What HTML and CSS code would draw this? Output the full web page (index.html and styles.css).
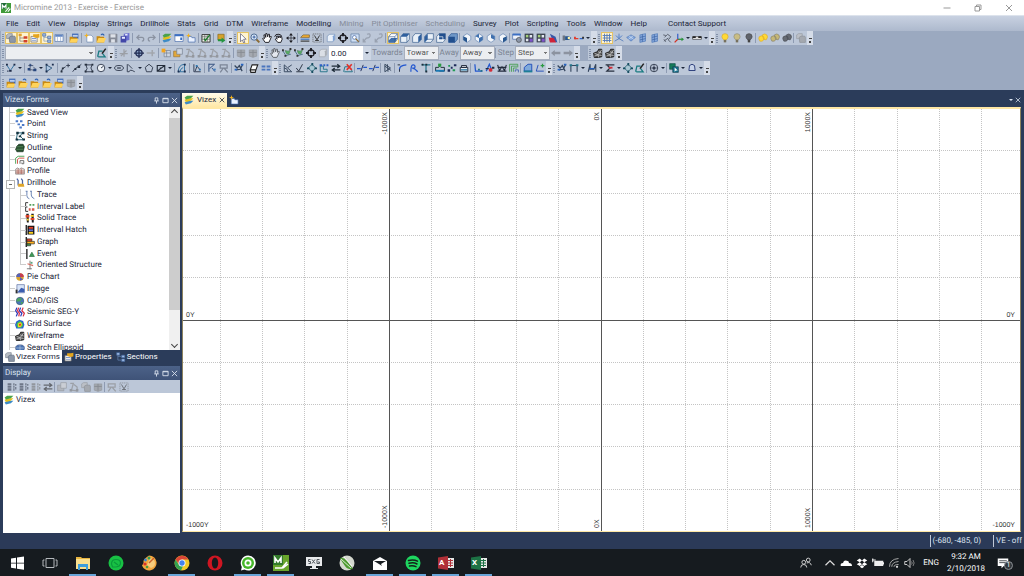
FILE: index.html
```html
<!DOCTYPE html>
<html lang="en">
<head>
    <meta charset="UTF-8">
    <meta name="viewport" content="width=device-width, initial-scale=1.0">
    <title>Micromine 2013 - Exercise - Exercise</title>
    <link rel="stylesheet" href="styles.css">
</head>
<body>
    <svg class="sprite" aria-hidden="true">
        <!-- general -->
        <symbol id="logo" viewBox="0 0 16 16"><path fill="#3f9a3a" d="M0 0h16v16H0z"/><path fill="#1d6b35" d="M0 0h9v9H0z"/><path fill="none" stroke="#fff" stroke-width="1.8" d="M2 9V3l3 4 3-4v6M7 14l6-7M11 14l4-5"/></symbol>
        <symbol id="box" viewBox="0 0 16 16"><path fill="#b8bdc4" stroke="#747b88" d="M1 3l3-2h6v8H1z"/><path fill="#8d97a8" stroke="#5d6878" d="M5 7l3-2h6l1 2v8H6z"/></symbol>
        <symbol id="tree" viewBox="0 0 16 16"><path fill="none" stroke="#666" d="M3 3v10h7M3 8h7"/><path fill="#e0a030" d="M1 1h5v4H1z"/><path fill="#d2412a" d="M9 5h6v4H9zM9 11h6v4H9z"/></symbol>
        <symbol id="properties" viewBox="0 0 16 16"><path fill="#eee" stroke="#666" d="M1.500 5.500h10v9h-10z"/><path fill="#5a7ec0" d="M3 8h7v1H3zM3 11h7v1H3z"/><path fill="#e5a51d" d="M5 2h6l4-1v6l-5 1-5-2z"/></symbol>
        <symbol id="sections" viewBox="0 0 16 16"><path fill="none" stroke="#6d8fbd" d="M3 4v9h6M3 7h6"/><path fill="#9db9e2" stroke="#3d629b" d="M1 1h5v4H1zM9 5h5v4H9zM9 11h5v4H9z"/></symbol>
        <symbol id="table" viewBox="0 0 16 16"><path fill="#fff" stroke="#4c6da5" d="M1.500 2.500h13v11h-13z"/><path fill="#5f85c3" d="M2 3h12v3H2z"/><path stroke="#8ca5cf" d="M5.500 6v7M10.500 6v7"/></symbol>
        <symbol id="folders" viewBox="0 0 16 16"><path fill="#3c66b5" d="M5 1h10v8H5z"/><path fill="#bcd0f0" d="M6 3h8v3H6z"/><path fill="#c98a12" d="M1 6h5l1 1h6v8H1z"/><path fill="#ffd35a" d="M3 9h12l-3 6H1z"/></symbol>
        <symbol id="new" viewBox="0 0 16 16"><path fill="#fff" stroke="#6580ac" d="M4.500 3.500h7l3 3v8h-10z"/><path fill="#f4b21c" d="M4 0l1 3 3 1-3 1-1 3-1-3-3-1 3-1z"/></symbol>
        <symbol id="open" viewBox="0 0 16 16"><path fill="#c98a12" d="M1 5h5l1 1h6v9H1z"/><path fill="#ffd35a" d="M4 8h12l-3 7H1z"/><path fill="none" stroke="#2f62b0" stroke-width="2" d="M8 3q3-3 5 1"/></symbol>
        <symbol id="save" viewBox="0 0 16 16"><path fill="#858b98" d="M1 1h13l1 1v13H1z"/><path fill="#dde1e8" d="M4 2h8v5H4zM5 10h6v5H5z"/></symbol>
        <symbol id="save-all" viewBox="0 0 16 16"><path fill="#6a6fd0" d="M6 1l9-1v11l-9 2z"/><path fill="#4247a8" d="M1 5l9-1v11H1z"/><path fill="#e8ebff" d="M3 6h5v3H3zM8 2l4-1v3H8z"/></symbol>
        <symbol id="undo" viewBox="0 0 16 16"><path fill="none" stroke="#8a92a1" stroke-width="2" d="M3 7h8q3 0 3 3t-3 3M7 3L3 7l4 4"/></symbol>
        <symbol id="redo" viewBox="0 0 16 16"><path fill="none" stroke="#8a92a1" stroke-width="2" d="M13 7H5q-3 0-3 3t3 3M9 3l4 4-4 4"/></symbol>
        <symbol id="layers" viewBox="0 0 16 16"><path fill="#3d8bc7" d="M1 12l4-3h10l-4 4-8 2z"/><path fill="#e3c11e" d="M1 8l4-3h10l-4 4-8 2z"/><path fill="#4aa24c" d="M1 4l4-3 10 0-4 4-8 2z"/></symbol>
        <symbol id="window" viewBox="0 0 16 16"><path fill="#fff" stroke="#3b62a7" d="M1.500 2.500h13v11h-13z"/><path fill="#3b6fc4" d="M1 2h14v3H1zM10 7h3v4h-3z"/></symbol>
        <symbol id="new-tab" viewBox="0 0 16 16"><path fill="#e9f1ff" stroke="#3b62a7" d="M3.500 5.500h5l1 2h5v7h-11z"/><path fill="#f4b21c" d="M4 0l1 3 3 1-3 1-1 3-1-3-3-1 3-1z"/></symbol>
        <symbol id="validate" viewBox="0 0 16 16"><path fill="#eef3ea" stroke="#333" stroke-width="1.500" d="M1.500 2.500h13v12h-13z"/><path stroke="#555" d="M1 6h13M6 3v11M10 3v11M1 10h13"/><path fill="none" stroke="#187c28" stroke-width="2" d="M5 9l2 3 7-9"/></symbol>
        <symbol id="export" viewBox="0 0 16 16"><path fill="#d5a22a" stroke="#80601a" d="M3 2h10v9H3z"/><path fill="#249440" d="M3 10h6V7l6 5-6 4v-3H3z"/></symbol>
        <symbol id="select" viewBox="0 0 16 16"><path fill="#fff" stroke="#446" d="M4 1l9 9H9l2 5-2 1-2-5-3 3z"/></symbol>
        <symbol id="zoom" viewBox="0 0 16 16"><path stroke="#8a6a33" stroke-width="3" d="M10 10l5 5"/><circle cx="6.500" cy="6.500" r="5" fill="#dcebfb" stroke="#47658f" stroke-width="1.500"/><path stroke="#35599a" stroke-width="1.500" d="M4 6.500h5M6.500 4v5"/></symbol>
        <symbol id="pan" viewBox="0 0 16 16"><path fill="#fff" stroke="#1c1c22" stroke-width="1.500" d="M5 15l-4-6 1-1 2 1-1-6h2l1 4V1h2l1 5 1-4h2l0 5 2-2 1 1-2 5-2 4z"/></symbol>
        <symbol id="rotate" viewBox="0 0 16 16"><path fill="#fff" stroke="#1c1c22" stroke-width="1.500" d="M6 15l-4-5 2-1 1 1-1-5h2l1 3V5h2l1 3V5h2l1 5-2 5z"/><path fill="none" stroke="#1c1c22" stroke-width="1.500" d="M1 6q1-5 7-4l4 2"/></symbol>
        <symbol id="move" viewBox="0 0 16 16"><path fill="#1c1c22" d="M8 0l3 4H5zM8 16l3-4H5zM0 8l4-3v6zM16 8l-4-3v6z"/><path fill="none" stroke="#1c1c22" d="M8 3v10M3 8h10"/></symbol>
        <symbol id="drafting" viewBox="0 0 16 16"><path fill="#f2b034" stroke="#6f5527" d="M1 7l4-4h10v4z"/><path fill="#4a7fc4" d="M1 9h14v2H1z"/><path fill="#444" d="M1 12h14v2H1z"/></symbol>
        <symbol id="frame" viewBox="0 0 16 16"><path fill="none" stroke="#555" d="M1.500 1.500h13v13h-13z" stroke-dasharray="2 1"/><path fill="none" stroke="#333" stroke-width="1.500" d="M4 4l4 7 4-7M5 12h6"/></symbol>
        <symbol id="cube" viewBox="0 0 16 16"><path fill="#eaf1fa" stroke="#6d8bb6" d="M2 5l4-3h8v8l-3 4H2z"/><path fill="#7fa2d5" d="M11 5l3-3v8l-3 4z"/></symbol>
        <symbol id="target" viewBox="0 0 16 16"><circle cx="8" cy="8" r="5" fill="none" stroke="#1c1c22" stroke-width="2"/><path stroke="#1c1c22" stroke-width="3" d="M8 0v5M8 11v5M0 8h5M11 8h5"/></symbol>
        <symbol id="zoom-window" viewBox="0 0 16 16"><path fill="#cfe0f5" stroke="#54719c" d="M1.500 1.500h13v13h-13z"/><circle cx="7" cy="7" r="3" fill="#fff" stroke="#35599a"/><path stroke="#8a6a33" stroke-width="2" d="M9 9l5 5"/></symbol>
        <symbol id="previous-view" viewBox="0 0 16 16"><path fill="none" stroke="#98a1b0" stroke-width="2" d="M8 2q5-2 5 2t-6 4l-5 6M2 9v5h4"/></symbol>

        <!-- view cubes -->
        <symbol id="view-front" viewBox="0 0 16 16"><path fill="#fff" stroke="#2f5587" d="M1 6l4-5h10v9l-4 5H1z"/><path fill="#3e6fad" d="M1 12l4-4h10l-4 7H1z"/><path fill="none" stroke="#2f5587" d="M1 6h10v9M11 6l4-5"/></symbol>
        <symbol id="view-top" viewBox="0 0 16 16"><path fill="#e9f0f8" stroke="#2f5587" d="M1 6l4-5h10v9l-4 5H1z"/><path fill="#2e5f9e" d="M1 6l4-5h10l-4 5z"/><path fill="none" stroke="#2f5587" d="M11 6v9"/></symbol>
        <symbol id="view-right" viewBox="0 0 16 16"><path fill="#e9f0f8" stroke="#2f5587" d="M1 6l4-5h10v9l-4 5H1z"/><path fill="#2e5f9e" d="M10 6l5-5v9l-5 5z"/></symbol>
        <symbol id="view-left" viewBox="0 0 16 16"><path fill="#e9f0f8" stroke="#2f5587" d="M1 6l4-5h10v9l-4 5H1z"/><path fill="#2e5f9e" d="M1 6l5-5v9l-5 5z"/><path fill="none" stroke="#2f5587" d="M6 10h9"/></symbol>
        <symbol id="view-back" viewBox="0 0 16 16"><path fill="#e9f0f8" stroke="#2f5587" d="M1 6l4-5h10v9l-4 5H1z"/><path fill="#214f8e" d="M5 1h10v9H5z"/><path fill="none" stroke="#fff" d="M2 6h9v8"/></symbol>
        <symbol id="view-bottom" viewBox="0 0 16 16"><path fill="#6f97c7" stroke="#214f8e" d="M1 6l4-5h10v9l-4 5H1z"/><path fill="#214f8e" d="M1 6h10v9H1z"/></symbol>
        <symbol id="iso-one" viewBox="0 0 16 16"><path fill="#f2f6fb" stroke="#5f80b0" d="M8 1l6 4v6l-6 4-6-4V5z"/><path fill="#27568f" d="M2 5l6 3v7l-6-4z"/></symbol>
        <symbol id="iso-two" viewBox="0 0 16 16"><path fill="#f2f6fb" stroke="#5f80b0" d="M8 1l6 4v6l-6 4-6-4V5z"/><path fill="#3f70ae" d="M8 1v7L2 5zM8 8l6-3v6l-6 4z"/></symbol>
        <symbol id="iso-three" viewBox="0 0 16 16"><path fill="#f2f6fb" stroke="#5f80b0" d="M8 1l6 4v6l-6 4-6-4V5z"/><path fill="#3f70ae" d="M8 2l6 3v6L8 8z"/></symbol>
        <symbol id="iso-four" viewBox="0 0 16 16"><path fill="#f2f6fb" stroke="#5f80b0" d="M8 1l6 4v6l-6 4-6-4V5z"/><path fill="#27568f" d="M14 5L8 8v7l6-4z"/></symbol>

        <symbol id="camera" viewBox="0 0 16 16"><path fill="#eef3fb" stroke="#3b62a7" d="M1 2h12v8H1z"/><path fill="#3b6fc4" d="M1 1h13v3H1z"/><circle cx="11" cy="11" r="4" fill="#8c97a9" stroke="#444"/></symbol>
        <symbol id="film" viewBox="0 0 16 16"><path fill="#3d4452" d="M1 1h14v14H1z"/><path fill="#a4d07a" d="M3 3h4v4H3z"/><path fill="#e4e8f0" d="M9 3h4v4H9zM3 9h4v4H3z"/><path fill="#7e54c8" d="M9 9h5v5H9z"/></symbol>
        <symbol id="film-stop" viewBox="0 0 16 16"><path fill="#3556a8" d="M3 1l9 5 3 9-7-2z"/><path fill="#cf2338" d="M1 7l8 1 4 7H3z"/></symbol>
        <symbol id="torch" viewBox="0 0 16 16"><path fill="#6b7583" d="M1 4h4v8H1z"/><path fill="#27568f" d="M5 5h6l4 3-4 3H5z"/><circle cx="11" cy="8" r="2" fill="#fff4a8"/></symbol>
        <symbol id="measure" viewBox="0 0 16 16"><path stroke="#e03b2c" stroke-width="2" d="M1 9h6"/><path stroke="#2d63c8" stroke-width="2" d="M9 9h6"/><path fill="#e03b2c" d="M0 6h3v4H0z"/><path fill="#333" d="M13 6h3v3h-3z"/></symbol>
        <symbol id="grid" viewBox="0 0 16 16"><path stroke="#567dbb" stroke-width="1.500" d="M4 1v14M8 1v14M12 1v14M1 4h14M1 8h14M1 12h14"/></symbol>
        <symbol id="axes" viewBox="0 0 16 16"><path fill="#a5bee5" stroke="#4873b5" stroke-width="1.200" d="M8 1v8M8 9l7 4M8 9l-7 4M3 4l5 5 5-5"/></symbol>
        <symbol id="plane" viewBox="0 0 16 16"><path fill="#86a8dc" stroke="#4873b5" d="M1 7l7-4 7 4-7 6z"/><path stroke="#d6e3f6" d="M5 5l7 5M11 5l-7 5"/></symbol>
        <symbol id="wall" viewBox="0 0 16 16"><path fill="#86a8dc" stroke="#4873b5" d="M3 3l9-2v12l-9 2z"/><path stroke="#375f9d" d="M3 7l9-2M3 11l9-2M7 2v12"/></symbol>
        <symbol id="ruler" viewBox="0 0 16 16"><path fill="none" stroke="#555d6b" stroke-width="1.500" d="M2 3l4 1M4 7l5-5 5 4-4 5 4 4M3 13l7-5M3 10l3 4"/></symbol>
        <symbol id="triad" viewBox="0 0 16 16"><path stroke="#28913b" stroke-width="2" d="M6 10h8"/><path stroke="#3a62c7" stroke-width="2" d="M6 10V1"/><path stroke="#d23125" stroke-width="2" d="M6 10l-5 5"/><path fill="#28913b" d="M12 7l4 3-4 3z"/></symbol>
        <symbol id="scale-bar" viewBox="0 0 16 16"><path fill="#fff" stroke="#222" d="M1 6h14v4H1z"/><path fill="#222" d="M1 5h5v3H1zM10 5h5v3h-5z"/></symbol>
        <symbol id="bulb" viewBox="0 0 16 16"><path fill="#ffd936" stroke="#d6a82b" d="M8 1q5 0 5 5 0 2-3 5H6Q3 8 3 6q0-5 5-5z"/><path fill="#77705d" d="M6 11h4v4H6z"/></symbol>
        <symbol id="bulb-dim" viewBox="0 0 16 16"><path fill="#c9bd83" stroke="#8b8874" d="M8 1q5 0 5 5 0 2-3 5H6Q3 8 3 6q0-5 5-5z"/><path fill="#77705d" d="M6 11h4v4H6z"/></symbol>
        <symbol id="bulb-off" viewBox="0 0 16 16"><path fill="#5f646c" stroke="#444" d="M8 1q5 0 5 5 0 2-3 5H6Q3 8 3 6q0-5 5-5z"/><path fill="#444" d="M6 11h4v4H6z"/></symbol>
        <symbol id="lamps" viewBox="0 0 16 16"><path fill="#ffd936" stroke="#dfac25" d="M7 3q4-3 7 0t-1 8l-4-1zM2 6q4-3 7 0t-2 7H3q-3-4-1-7z"/></symbol>
        <symbol id="lamps-dim" viewBox="0 0 16 16"><path fill="#c6b876" stroke="#837f6d" d="M7 3q4-3 7 0t-1 8l-4-1zM2 6q4-3 7 0t-2 7H3q-3-4-1-7z"/></symbol>
        <symbol id="lamps-off" viewBox="0 0 16 16"><path fill="#666b73" stroke="#484c54" d="M7 3q4-3 7 0t-1 8l-4-1zM2 6q4-3 7 0t-2 7H3q-3-4-1-7z"/></symbol>

        <!-- editing -->
        <symbol id="string" viewBox="0 0 16 16"><path fill="none" stroke="#1f5f73" stroke-width="1.500" d="M2 14l2-11h8L8 8l6 6z"/><path fill="#15333f" d="M1 12h4v3H1zM2 1h4v4H2zM11 1h4v4h-4zM6 7h4v3H6zM12 12h4v3h-4z"/></symbol>
        <symbol id="edit-string" viewBox="0 0 16 16"><path fill="none" stroke="#187b80" stroke-width="2" d="M1 14l2-9h6M2 14h11l-4-5"/><path fill="none" stroke="#222" stroke-width="2.500" d="M8 9l6-8"/></symbol>
        <symbol id="snap" viewBox="0 0 16 16"><path fill="none" stroke="#7d8798" stroke-width="2" d="M1 9h13M8 2v12M3 13l9-9"/></symbol>
        <symbol id="globe" viewBox="0 0 16 16"><circle cx="8" cy="8" r="5" fill="#8fa9cf" stroke="#222c52" stroke-width="2"/><path stroke="#222c52" stroke-width="2" d="M8 0v16M0 8h16"/></symbol>
        <symbol id="point-add" viewBox="0 0 16 16"><path stroke="#8992a2" stroke-width="2.500" d="M1 8h6M10 3v10M7 8h7"/></symbol>
        <symbol id="sheet-new" viewBox="0 0 16 16"><path fill="#cdd5e2" stroke="#6e7889" d="M5 4h10v10H5z"/><path stroke="#6e7889" d="M5 8h10M9 4v10"/><path fill="#f4a51c" d="M1 1h6v6H1z"/></symbol>
        <symbol id="sheet-open" viewBox="0 0 16 16"><path fill="#e2a83a" stroke="#967034" d="M1 5h10v9H1z"/><path fill="#cdd5e2" stroke="#6e7889" d="M6 1h9v9H6z"/></symbol>
        <symbol id="segment" viewBox="0 0 16 16"><path fill="none" stroke="#7f8898" stroke-width="2" d="M2 2h5L4 13l9 1V8L8 4"/><path fill="#6f788c" d="M1 11h4v4H1zM11 11h4v4h-4z"/></symbol>
        <symbol id="grey-sheet" viewBox="0 0 16 16"><path fill="#8d96a6" stroke="#6d7687" d="M2 3h12v10l-6 2-6-2z"/><path stroke="#5c6577" stroke-width="1.500" d="M2 7h12M8 3v11"/></symbol>
        <symbol id="leaf" viewBox="0 0 16 16"><path fill="none" stroke="#4b6f88" stroke-width="1.500" d="M1 4l5 8 8-2"/><path fill="#53b060" stroke="#5c7b68" d="M5 4l5 1 4-3-3 8-4-1z"/><path fill="#333" d="M0 2h3v3H0zM4 11h3v3H4zM12 0h3v3h-3z"/></symbol>
        <symbol id="solid" viewBox="0 0 16 16"><path fill="#555" stroke="#1d1d1d" stroke-width="1.500" d="M1 8l6-2 2-4h5v12l-5 1H2z"/><path fill="none" stroke="#ddd" d="M2 8l6 3 6-8M8 11l1 4M2 13l6-2 6 1M8 6l6 2"/></symbol>
        <symbol id="arrow-left" viewBox="0 0 16 16"><path fill="#8c93a0" d="M0 8l6-5v3h9v4H6v3z"/></symbol>
        <symbol id="arrow-right" viewBox="0 0 16 16"><path fill="#8c93a0" d="M16 8l-6-5v3H1v4h9v3z"/></symbol>

        <!-- string tools -->
        <symbol id="line" viewBox="0 0 16 16"><path fill="none" stroke="#2f6f9f" stroke-width="1.500" d="M1 3l6 9 7-10"/><path fill="#1e2945" d="M0 1h3v3H0zM5 11h4v3H5zM12 1h3v3h-3zM2 12h2v2H2z"/></symbol>
        <symbol id="nodes" viewBox="0 0 16 16"><path fill="none" stroke="#55617a" stroke-width="1.500" d="M2 4h8M2 10l12 2M5 1v12M10 6l4 4"/><path fill="#27457c" d="M1 8h4v4H1zM4 2h3v3H4zM10 9h5v4h-5z"/></symbol>
        <symbol id="play-line" viewBox="0 0 16 16"><path fill="#aec5e0" stroke="#345a7e" stroke-width="1.500" d="M2 3l9 5-9 6z"/><path fill="#1b2c4c" d="M11 1h3v3h-3zM1 1h3v3H1zM1 12h3v3H1z"/></symbol>
        <symbol id="polyline" viewBox="0 0 16 16"><path fill="none" stroke="#333d50" stroke-width="1.500" d="M2 14l2-5 5-3M10 4h6M13 1v6"/><path fill="#27303f" d="M1 12h3v3H1zM3 7h3v3H3z"/></symbol>
        <symbol id="slope" viewBox="0 0 16 16"><path fill="none" stroke="#333d50" stroke-width="1.500" d="M1 14l4-5 5-3 5-4"/><path fill="#27303f" d="M4 8h3v3H4zM9 4h4v4H9z"/></symbol>
        <symbol id="polygon" viewBox="0 0 16 16"><path fill="none" stroke="#333d50" stroke-width="1.500" d="M3 3h10l-2 5 3 6H2l3-5z"/><path fill="#27303f" d="M1 1h4v3H1zM12 1h3v3h-3zM1 12h3v3H1zM12 12h3v3h-3z"/></symbol>
        <symbol id="circle" viewBox="0 0 16 16"><circle cx="8" cy="8" r="6" fill="#edf1f6" stroke="#333d50" stroke-width="1.500"/><path stroke="#333d50" stroke-width="1.500" d="M8 8l4-3"/></symbol>
        <symbol id="ellipse" viewBox="0 0 16 16"><ellipse cx="8" cy="8" rx="7" ry="4" fill="none" stroke="#333d50" stroke-width="1.500"/><path stroke="#333d50" stroke-width="2" d="M5 8h6"/></symbol>
        <symbol id="curve" viewBox="0 0 16 16"><path fill="none" stroke="#333d50" stroke-width="1.500" d="M2 2v12h3q1-4 5-2l4 2M3 2l7 7"/></symbol>
        <symbol id="pentagon" viewBox="0 0 16 16"><path fill="none" stroke="#333d50" stroke-width="1.500" d="M8 2l6 5-2 7H4L2 7z"/></symbol>
        <symbol id="rectangle" viewBox="0 0 16 16"><path fill="none" stroke="#222b39" stroke-width="1.800" d="M2 4h12v9H2zM2 13L14 4M6 8h4"/></symbol>
        <symbol id="arc" viewBox="0 0 16 16"><path fill="none" stroke="#2f6f9f" stroke-width="1.500" d="M2 14Q2 3 12 2v12zM5 14q0-5 5-7"/><path fill="#1b2c4c" d="M1 12h3v3H1zM11 1h3v3h-3zM11 12h3v3h-3z"/></symbol>
        <symbol id="trim" viewBox="0 0 16 16"><path fill="none" stroke="#2f3b52" stroke-width="1.500" d="M3 2v12h11M5 13L8 5l5 6"/><path fill="#2b78b4" d="M6 3h3v3H6zM11 9h3v3h-3z"/></symbol>
        <symbol id="flag-line" viewBox="0 0 16 16"><path fill="none" stroke="#2e4a7b" stroke-width="1.500" d="M3 1v13M3 2h9L4 9M8 8l5 6"/><path fill="#4680c1" d="M10 9h4v3h-4z"/></symbol>
        <symbol id="tripod" viewBox="0 0 16 16"><path fill="none" stroke="#7b8596" stroke-width="2" d="M2 3h11v5H2zM7 8l-5 7M8 8l6 7"/></symbol>
        <symbol id="surface" viewBox="0 0 16 16"><path fill="none" stroke="#35465e" stroke-width="2" d="M1 4l4 4 3-3M3 11l7-1 4-8M8 3l5 10"/><path fill="#2866c2" d="M1 9h4v3H1zM11 1h4v3h-4z"/></symbol>
        <symbol id="eraser" viewBox="0 0 16 16"><path fill="#fff" stroke="#222" stroke-width="1.800" d="M5 3h9l-3 8H2zM2 11l1 4h7l1-4"/></symbol>
        <symbol id="label" viewBox="0 0 16 16"><path fill="#4a75bd" d="M1 4h6v3H1zM9 4h6v3H9zM1 9h6v3H1zM9 9h6v3H9z"/></symbol>
        <symbol id="angle" viewBox="0 0 16 16"><path fill="none" stroke="#35465e" stroke-width="1.500" d="M2 3v11h12zM2 8q5 0 6 6M8 7l6-4"/></symbol>
        <symbol id="check-line" viewBox="0 0 16 16"><path fill="none" stroke="#27303f" stroke-width="1.500" d="M2 8l4 5 6-11M2 14h12"/></symbol>
        <symbol id="diamond" viewBox="0 0 16 16"><path fill="#a9c7d4" stroke="#3c7181" stroke-width="1.500" d="M8 2l6 6-6 6-6-6z"/><path fill="#184f62" d="M7 0h3v4H7zM7 12h3v4H7zM0 7h4v3H0zM12 7h4v3h-4z"/></symbol>
        <symbol id="steps" viewBox="0 0 16 16"><path fill="none" stroke="#247489" stroke-width="1.500" d="M2 14V5h5v5h6v4z"/><path fill="#2b5fc4" d="M1 2h4v3H1zM7 2h3v3H7zM12 2h3v3h-3z"/></symbol>
        <symbol id="swap" viewBox="0 0 16 16"><path fill="none" stroke="#1d2b38" stroke-width="2" d="M1 5h12M10 2l4 3-4 3M15 11H3M6 8l-4 3 4 3"/></symbol>
        <symbol id="delete-string" viewBox="0 0 16 16"><path fill="none" stroke="#247489" stroke-width="1.500" d="M1 14l2-8h5M2 14h13l-2-4"/><path stroke="#e1302a" stroke-width="2.500" d="M6 2l8 9M14 2l-8 9"/></symbol>
        <symbol id="split" viewBox="0 0 16 16"><path stroke="#2458cf" stroke-width="2" d="M0 9h6M10 7h6"/><path stroke="#1d2b58" stroke-width="1.500" d="M6 13l4-10"/></symbol>
        <symbol id="dot-line" viewBox="0 0 16 16"><path fill="none" stroke="#34455c" stroke-width="1.500" d="M3 2v12l9-6zM3 5l10 7M7 2l1 12"/></symbol>
        <symbol id="fillet" viewBox="0 0 16 16"><path fill="none" stroke="#222b3c" stroke-width="1.500" d="M1 3h4M4 14V8"/><path fill="none" stroke="#2458cf" stroke-width="2.200" d="M4 10q0-6 11-7"/></symbol>
        <symbol id="loop" viewBox="0 0 16 16"><path fill="none" stroke="#2458cf" stroke-width="2" d="M3 14q0-12 4-11t2 5H5q5 1 9 6"/></symbol>
        <symbol id="tee" viewBox="0 0 16 16"><path fill="none" stroke="#247489" stroke-width="2" d="M1 3h14M8 3v11"/><path fill="#1d2b38" d="M1 1h3v3H1zM7 1h3v3H7zM7 12h3v3H7z"/></symbol>
        <symbol id="join" viewBox="0 0 16 16"><path fill="none" stroke="#1d2b38" stroke-width="1.500" d="M1 13V7h5l3-4M7 13h8V7H9"/><path fill="#2a9a42" d="M5 1h5v5H5z"/><path fill="#1b79b5" d="M1 11h14v3H1z"/></symbol>
        <symbol id="scatter" viewBox="0 0 16 16"><path fill="#1d2b58" d="M1 10h4v4H1zM6 6h3v3H6zM11 2h4v3h-4z"/><path fill="#219a55" d="M9 10h4v3H9zM2 3h3v3H2z"/></symbol>
        <symbol id="merge" viewBox="0 0 16 16"><path fill="#e8edf2" stroke="#222b3c" stroke-width="1.500" d="M2 7h12v7H2zM4 4h8v3H4z"/><path fill="#1d6f9f" d="M3 10h10v2H3z"/></symbol>
        <symbol id="corner" viewBox="0 0 16 16"><path fill="none" stroke="#2458cf" stroke-width="2" d="M3 2l1 11h11"/><path fill="#247489" d="M8 9h3v3H8zM12 11h3v3h-3z"/></symbol>
        <symbol id="ball-red" viewBox="0 0 16 16"><path fill="none" stroke="#2458cf" stroke-width="2" d="M2 13L7 2l3 8"/><circle cx="9" cy="11" r="3" fill="#d42e39"/><path fill="#222b3c" d="M1 8h5v2H1zM11 6h4v3h-4z"/></symbol>
        <symbol id="glasses" viewBox="0 0 16 16"><path fill="none" stroke="#222b3c" stroke-width="1.800" d="M1 3l3 9 4-6 4 6 3-9M1 7h14M1 13h14"/></symbol>
        <symbol id="contour" viewBox="0 0 16 16"><path fill="none" stroke="#3c9b45" stroke-width="1.300" d="M1 14V2h13v5M4 14V5h9M7 14V8h6"/><path fill="none" stroke="#4a67ae" stroke-width="1.500" d="M10 14v-3h5v4"/></symbol>
        <symbol id="extrude" viewBox="0 0 16 16"><path fill="#7fa9db" stroke="#234fba" stroke-width="1.500" d="M2 7l6-5h6v11H2z"/><path fill="#1d7e96" d="M1 12h14v3H1z"/></symbol>
        <symbol id="extend" viewBox="0 0 16 16"><path fill="none" stroke="#234fba" stroke-width="1.500" d="M5 3L2 13h12"/><path stroke="#2a9a42" stroke-width="2" d="M9 4h6M12 1v6"/></symbol>
        <symbol id="bench" viewBox="0 0 16 16"><path fill="none" stroke="#35465e" stroke-width="1.800" d="M3 14V4h10v10"/><path fill="#247489" d="M1 2h4v3H1zM11 2h4v3h-4z"/></symbol>
        <symbol id="zigzag" viewBox="0 0 16 16"><path fill="none" stroke="#35465e" stroke-width="1.800" d="M2 14l3-12v8h6l3-8v12"/><path fill="#1f5dbd" d="M4 8h8v2H4z"/></symbol>
        <symbol id="sigma" viewBox="0 0 16 16"><path fill="none" stroke="#27303f" stroke-width="2" d="M1 3h14M4 4l4 4-5 5h12"/><path fill="#d42e39" d="M6 6h6v3H6z"/></symbol>
        <symbol id="wheel" viewBox="0 0 16 16"><circle cx="8" cy="8" r="6" fill="none" stroke="#333d50" stroke-width="1.500"/><circle cx="8" cy="8" r="2.500" fill="#333d50"/><path stroke="#333d50" d="M2 8h12M8 2v12"/></symbol>
        <symbol id="blocks" viewBox="0 0 16 16"><path fill="#147a5a" stroke="#0c4a45" d="M1 1h9v9H1z"/><path fill="#16708c" stroke="#143c4d" d="M6 6h9v9H6z"/><path fill="#fff" d="M9 7l5 5h-3l-2 2z"/></symbol>
        <symbol id="shield" viewBox="0 0 16 16"><path fill="#c7d3e8" stroke="#273a78" stroke-width="1.500" d="M3 12h10l-1-8-4-2-4 2z"/></symbol>

        <!-- form icons -->
        <symbol id="point" viewBox="0 0 16 16"><path fill="#4a78c8" d="M1 2h4v3H1zM8 2h4v3H8zM4 7h4v3H4zM11 8h4v3h-4zM7 12h4v3H7z"/></symbol>
        <symbol id="outline" viewBox="0 0 16 16"><path fill="#274d2d" stroke="#132d1a" d="M3 5l3-3h7l2 4-2 8H3l-2-4z"/><path stroke="#69a06c" d="M3 6h10M2 10h11"/></symbol>
        <symbol id="contour-form" viewBox="0 0 16 16"><path fill="none" stroke="#4ba154" stroke-width="1.500" d="M1 14V5l4-3h10"/><path fill="none" stroke="#d05143" stroke-width="1.500" d="M4 14V7l3-2h8"/><path fill="none" stroke="#666" stroke-width="1.500" d="M8 14V9h6v5h-3v-2"/></symbol>
        <symbol id="profile" viewBox="0 0 16 16"><path fill="#e8d9d6" stroke="#777" d="M1 5l3-2 3 2 3-2 5 2v8H1z"/><path fill="none" stroke="#a35043" d="M1 8h14M1 11h14M5 4v9M10 4v9"/></symbol>
        <symbol id="drillhole" viewBox="0 0 16 16"><path fill="none" stroke="#4963a0" stroke-width="2" d="M3 1l2 3v8M10 1l2 3v6"/><path fill="#dda52b" d="M5 9h9l1 5H5z"/></symbol>
        <symbol id="trace" viewBox="0 0 16 16"><path fill="none" stroke="#4f6ea6" stroke-width="1.300" d="M1 2h3M3 2v7q0 4 4 5M8 2h3M10 2v6q0 4 5 6"/></symbol>
        <symbol id="interval-label" viewBox="0 0 16 16"><path fill="none" stroke="#333" stroke-width="1.500" d="M5 1H1v14h4M1 8h3"/><path fill="#55a05b" d="M7 3h3v3H7zM12 3h3v3h-3z"/><path fill="#d45a4e" d="M6 10h3v4H6zM11 10h4v4h-4z"/></symbol>
        <symbol id="solid-trace" viewBox="0 0 16 16"><path fill="#222" d="M2 1h4v14H3zM10 1h4v14h-3z"/><path fill="#e0432a" d="M1 3h6v4H1zM9 8h6v3H9z"/><path fill="#ffd21e" d="M9 3h5v3H9zM3 9h3v3H3z"/></symbol>
        <symbol id="interval-hatch" viewBox="0 0 16 16"><path fill="#111" d="M1 0h2v16H1zM4 1h11v14H4z"/><path fill="#e0432a" d="M6 3h7v3H6z"/><path fill="#5d6ed0" d="M6 7h7v3H6z"/><path fill="#ffd21e" d="M6 11h7v3H6z"/></symbol>
        <symbol id="graph" viewBox="0 0 16 16"><path fill="#111" d="M1 0h2v16H1z"/><path fill="#e0432a" stroke="#222" d="M3 3h8v4H3z"/><path fill="#ffb11e" stroke="#222" d="M3 7h12v4H3z"/><path fill="#4ca256" stroke="#222" d="M3 11h6v3H3z"/></symbol>
        <symbol id="event" viewBox="0 0 16 16"><path fill="#111" d="M2 0h2v16H2z"/><path fill="#3d9b55" stroke="#26663a" d="M7 12l4-7 4 7z"/></symbol>
        <symbol id="structure" viewBox="0 0 16 16"><path fill="none" stroke="#777" stroke-width="1.500" d="M8 1v14M3 14h8"/><path fill="none" stroke="#d86c5f" stroke-width="2" d="M4 6l9 3"/><path fill="#5aa47c" d="M9 3h3v3H9z"/></symbol>
        <symbol id="pie" viewBox="0 0 16 16"><circle cx="8" cy="8" r="6" fill="#d7a22f"/><path fill="#c63e55" d="M8 8V2a6 6 0 0 1 6 6z"/><path fill="#5762b8" d="M8 8H2a6 6 0 0 1 6-6zM8 8l5 4-5 2z"/></symbol>
        <symbol id="image" viewBox="0 0 16 16"><path fill="#d8e4f8" stroke="#53699c" d="M3 1h12v13H3z"/><path fill="#3c5eb0" d="M4 13l6-7 5 2v5z"/><path fill="#333" d="M1 9h3v6H1z"/></symbol>
        <symbol id="cad" viewBox="0 0 16 16"><circle cx="8" cy="8" r="6" fill="#4976b8" stroke="#33536f"/><path fill="#4ba35c" d="M5 3l6 1-2 4-5 1-2-2zM9 9l4 1-3 4z"/></symbol>
        <symbol id="seismic" viewBox="0 0 16 16"><path fill="none" stroke="#2b38b7" stroke-width="2" d="M3 1L1 6l3 4-2 5M9 1L7 6l4 4-2 5"/><path fill="none" stroke="#d92e45" stroke-width="2" d="M6 1L4 6l3 4-1 5M13 1l-2 5 4 4-2 5"/></symbol>
        <symbol id="grid-surface" viewBox="0 0 16 16"><path fill="#2b61d8" d="M2 4l5-3 6 2 2 6-2 6H2L0 9z"/><path fill="#46bd54" d="M4 5l4-2 4 3 1 4-3 4H4L2 9z"/><path fill="#ffe029" d="M5 7l4-2 2 3-1 4-5 1z"/><path fill="#e33b27" d="M6 8l3-1 1 3-3 1z"/></symbol>
        <symbol id="ellipsoid" viewBox="0 0 16 16"><ellipse cx="8" cy="8" rx="7" ry="5" fill="#4974b5" stroke="#263d73"/><path stroke="#bcd" d="M1 8h14M8 3v10"/></symbol>
        <symbol id="columns" viewBox="0 0 16 16"><path fill="#6e7787" d="M1 2h6v3H1zM1 6h6v3H1zM1 10h6v4H1zM10 2h2v3h-2zM10 6h2v3h-2zM10 10h2v4h-2zM13 3h2v3h-2zM13 8h2v4h-2z"/></symbol>

        <!-- window and panel controls -->
        <symbol id="minimise" viewBox="0 0 16 16"><path stroke="#999" stroke-width="2" d="M1 8h14"/></symbol>
        <symbol id="restore" viewBox="0 0 16 16"><path fill="none" stroke="#999" stroke-width="2" d="M2 5h9v9H2zM5 5V2h9v9h-3"/></symbol>
        <symbol id="close" viewBox="0 0 16 16"><path fill="none" stroke="currentColor" stroke-width="2" d="M2 2l12 12M14 2L2 14"/></symbol>
        <symbol id="pin" viewBox="0 0 16 16"><path fill="none" stroke="currentColor" stroke-width="2" d="M5 9V2h6v7M3 9h10M8 9v6"/></symbol>
        <symbol id="maximise" viewBox="0 0 16 16"><path fill="none" stroke="currentColor" stroke-width="2" d="M2 3h12v10H2zM2 4h12"/></symbol>

        <!-- taskbar -->
        <symbol id="start" viewBox="0 0 16 16"><path fill="#fff" d="M2 3.500l5-.8v5H2zM8 2.500l7-1v6.200H8zM2 8.500h5v5l-5-.8zM8 8.500h7v6.200l-7-1z"/></symbol>
        <symbol id="task-view" viewBox="0 0 16 16"><path fill="none" stroke="#b5b9bd" d="M4 3.500h8v9H4zM2.500 5H1v6h1.500M13.500 5H15v6h-1.500"/></symbol>
        <symbol id="explorer" viewBox="0 0 16 16"><path fill="#e8b540" d="M1 2h5l1 1h8v3H1z"/><path fill="#fadf8e" d="M1 4h14v10H1z"/><path fill="#3d9ddb" d="M3 9h10v6h-2v-3H5v3H3z"/></symbol>
        <symbol id="whatsapp" viewBox="0 0 16 16"><circle cx="8" cy="8" r="7.500" fill="#18c144"/><path fill="none" stroke="#0a9a3a" stroke-width="1.200" d="M3.500 9q0-4.500 4.500-4.500T12.500 8t-4.500 4H4.500zM6 7l4 3"/></symbol>
        <symbol id="paint" viewBox="0 0 16 16"><path fill="#f3a83f" d="M8 .5a7.500 7.500 0 1 1-7 10q2-2 1.500-4T8 .5z"/><path fill="#f7cd7d" d="M9 3q5 1 5 5t-4 5l-4-3z"/><circle cx="4" cy="9" r="1.600" fill="#d9342b"/><circle cx="8" cy="3" r="1.500" fill="#2b9f55"/><circle cx="4.500" cy="5" r="1.400" fill="#3285d4"/><circle cx="6" cy="12" r="1.300" fill="#4c9c3e"/><path stroke="#c9612a" stroke-width="1.500" d="M8 8l5-5"/></symbol>
        <symbol id="chrome" viewBox="0 0 16 16"><circle cx="8" cy="8" r="7.500" fill="#f1c928"/><path fill="#da4637" d="M1.500 4.500A7.500 7.500 0 0 1 14.600 4.500H8L5 9z"/><path fill="#33a353" d="M1.500 4.500L5 10l4 1-2 4.400A7.500 7.500 0 0 1 1.500 4.500z"/><circle cx="8" cy="8" r="3.500" fill="#fff"/><circle cx="8" cy="8" r="2.700" fill="#4383ed"/></symbol>
        <symbol id="opera" viewBox="0 0 16 16"><ellipse cx="8" cy="8" rx="7.500" ry="7.500" fill="#ce1622"/><ellipse cx="8" cy="8" rx="3.200" ry="5.600" fill="#15191d"/></symbol>
        <symbol id="whatsapp-desktop" viewBox="0 0 16 16"><path fill="#fff" d="M8 .5a7.500 7.500 0 1 1-3.500 14L1 15.500l.8-3.600A7.500 7.500 0 0 1 8 .5z"/><circle cx="8" cy="8" r="6" fill="#46b629"/><circle cx="8" cy="8" r="3.500" fill="#fff"/><circle cx="8" cy="8" r="1.800" fill="#46b629"/></symbol>
        <symbol id="micromine" viewBox="0 0 16 16"><path fill="#69a52c" d="M0 0h16v16H0z"/><path fill="#347b2c" d="M0 0h10v10H0z"/><path fill="none" stroke="#fff" stroke-width="1.600" d="M2 8V3l3 4 3-4v5M2 13l7 0 5-6M10 13l5-4"/></symbol>
        <symbol id="sxg" viewBox="0 0 16 16"><path fill="#e8eaec" d="M0 2h16v9H0zM6 11h4v2h2v1H4v-1h2z"/><path fill="none" stroke="#51575d" d="M4.500 4.500h-2v2h2v2h-2M6 4.500l3 4M9 4.500l-3 4M13.500 4.500h-2.500v4h2.500V7H12"/></symbol>
        <symbol id="corel" viewBox="0 0 16 16"><circle cx="8" cy="8" r="7.500" fill="#d4d8cf"/><path fill="#4d9a30" d="M1 3q4-1 7 3t6 8q-5 1-8-3T1 3z"/><path fill="none" stroke="#fff" stroke-width=".8" d="M2 4l10 9M5 2l8 9"/></symbol>
        <symbol id="mail" viewBox="0 0 16 16"><path fill="#fff" d="M1 6l7-4 7 4v9H1z"/><path fill="#171c20" d="M2 6h12l-5 3 1 2-3-2z"/></symbol>
        <symbol id="spotify" viewBox="0 0 16 16"><circle cx="8" cy="8" r="7.500" fill="#1ed760"/><path fill="none" stroke="#14231a" stroke-width="1.500" stroke-linecap="round" d="M3.500 5.500q5-1.500 9 .7M4 8.300q4.500-1.200 8 .7M4.500 11q3.500-.8 6.500.6"/></symbol>
        <symbol id="office" viewBox="0 0 16 16"><path fill="#e6e8e6" d="M8 3h8v10H8z"/><path fill="none" stroke="currentColor" d="M10 5.500h5M10 8h5M10 10.500h5M12.500 4v8"/><path fill="currentColor" d="M0 2.500L10 1v14L0 13.500z"/></symbol>
        <symbol id="people" viewBox="0 0 16 16"><g fill="none" stroke="#ddd" stroke-width="1.200"><circle cx="5" cy="7" r="2.500"/><path d="M1 14q0-4 4-4t4 4"/><circle cx="11" cy="4" r="2.500"/><path d="M9 8q5-2 6 3"/></g></symbol>
        <symbol id="tray-up" viewBox="0 0 16 16"><path fill="none" stroke="#ddd" stroke-width="1.600" d="M2 11l6-6 6 6"/></symbol>
        <symbol id="cloud" viewBox="0 0 16 16"><path fill="#fff" d="M1 12q-1-4 3-4 1-4 5-3 3 0 3 3 4 0 4 4z"/></symbol>
        <symbol id="dropbox" viewBox="0 0 16 16"><path fill="#fff" d="M5 2L1 4.500 5 7l3-2.500zM11 2L8 4.500 11 7l4-2.500zM1 9.500L5 7l3 2.500L5 12zM8 9.500L11 7l4 2.500-4 2.500zM5 13l3-2.500 3 2.500-3 2z"/></symbol>
        <symbol id="battery" viewBox="0 0 16 16"><path fill="#eee" d="M3 5h12v2h1v3h-1v2H3z"/><path stroke="#eee" stroke-width="1.500" d="M0 4h5M1 2v5"/></symbol>
        <symbol id="wifi" viewBox="0 0 16 16"><path fill="none" stroke="#aaa" stroke-width="1.300" d="M2 13Q2 3 14 2M5 13q0-6 9-7M8 13q0-3 6-3"/><circle cx="12" cy="13" r="1.500" fill="#ddd"/></symbol>
        <symbol id="volume" viewBox="0 0 16 16"><path fill="none" stroke="#ccc" stroke-width="1.300" d="M1 6h3l4-4v12l-4-4H1z"/><path fill="none" stroke="#888" stroke-width="1.200" d="M10 6q2 2 0 4M12 4q3 4 0 8"/></symbol>
        <symbol id="notes" viewBox="0 0 16 16"><path fill="#fff" d="M1 2h14v10H9l-3 3v-3H1z"/><path stroke="#171c20" d="M3 5h10M3 7.500h10"/></symbol>
    </svg>

    <header class="title-bar">
        <svg class="icon"><use href="#logo"/></svg>
        <h1>Micromine 2013 - Exercise - Exercise</h1>
        <div class="window-buttons">
            <button aria-label="Minimise"><svg><use href="#minimise"/></svg></button>
            <button aria-label="Restore"><svg><use href="#restore"/></svg></button>
            <button aria-label="Close"><svg><use href="#close"/></svg></button>
        </div>
    </header>

    <nav class="menu-bar">
        <button>File</button>
        <button>Edit</button>
        <button>View</button>
        <button>Display</button>
        <button>Strings</button>
        <button>Drillhole</button>
        <button>Stats</button>
        <button>Grid</button>
        <button>DTM</button>
        <button>Wireframe</button>
        <button>Modelling</button>
        <button disabled>Mining</button>
        <button disabled>Pit Optimiser</button>
        <button disabled>Scheduling</button>
        <button>Survey</button>
        <button>Plot</button>
        <button>Scripting</button>
        <button>Tools</button>
        <button>Window</button>
        <button>Help</button>
        <button class="support">Contact Support</button>
    </nav>

    <div class="dock">
        <div class="dock-row">
            <div class="toolbar roomy" data-tools="box* tree* properties* sections* table | folders | new open save save-all | undo redo | layers window new-tab | validate | export"></div>
            <div class="toolbar" data-tools="select* zoom pan rotate move | drafting frame | cube target zoom-window previous-view previous-view | view-front* view-top view-right view-left view-back view-bottom | iso-one iso-two iso-three iso-four | camera film film film-stop | torch measure v"></div>
            <div class="toolbar" data-tools="grid* axes plane wall wall ruler triad v scale-bar v"></div>
            <div class="toolbar" data-tools="bulb bulb-dim bulb-off | lamps lamps-dim lamps-off | box!"></div>
        </div>
        <div class="dock-row">
            <div class="toolbar" data-tools="edit-string">
                <select class="layer-select" aria-label="Active layer"><option></option></select>
            </div>
            <div class="toolbar roomy" data-tools="snap! | globe point-add! | sheet-new sheet-open segment! segment! segment! segment! | grey-sheet! grey-sheet!"></div>
            <div class="toolbar" data-tools="pan! leaf leaf target cube!">
                <div class="fields">
                    <input class="distance" type="text" value="0.00" aria-label="Distance"><button class="distance-drop" aria-label="Recent distances"></button>
                    <label for="towards">Towards</label>
                    <select id="towards" disabled><option>Towar</option></select>
                    <label for="away">Away</label>
                    <select id="away" disabled><option>Away</option></select>
                    <span class="sep"></span>
                    <label for="step">Step</label>
                    <select id="step" disabled><option>Step</option></select>
                    <button class="tool" title="arrow left"><svg><use href="#arrow-left"/></svg></button>
                    <button class="tool" title="arrow right"><svg><use href="#arrow-right"/></svg></button>
                </div>
            </div>
            <div class="toolbar apart" data-tools="solid solid"></div>
        </div>
        <div class="dock-row">
            <div class="toolbar roomy" data-tools="line v | nodes v play-line | polyline slope polygon circle v ellipse curve v pentagon rectangle v | arc | trim | flag-line tripod | surface | eraser label"></div>
            <div class="toolbar" data-tools="angle check-line diamond steps swap delete-string | split split | dot-line | fillet loop tee | join scatter merge | corner ball-red glasses contour | extrude extend"></div>
            <div class="toolbar" data-tools="surface bench v zigzag v sigma v diamond edit-string | wheel v | blocks v shield v"></div>
        </div>
        <div class="dock-row">
            <div class="toolbar" data-tools="folders open open open folders grey-sheet!"></div>
        </div>
    </div>

    <main class="workspace">
        <aside class="sidebar">
            <section class="panel">
                <div class="panel-header">
                    <h2>Vizex Forms</h2>
                    <button aria-label="Pin"><svg><use href="#pin"/></svg></button>
                    <button aria-label="Maximise"><svg><use href="#maximise"/></svg></button>
                    <button aria-label="Close"><svg><use href="#close"/></svg></button>
                </div>
                <div class="tree-box">
                    <ul class="tree">
                        <li><svg class="icon"><use href="#layers"/></svg>Saved View</li>
                        <li><svg class="icon"><use href="#point"/></svg>Point</li>
                        <li><svg class="icon"><use href="#string"/></svg>String</li>
                        <li><svg class="icon"><use href="#outline"/></svg>Outline</li>
                        <li><svg class="icon"><use href="#contour-form"/></svg>Contour</li>
                        <li><svg class="icon"><use href="#profile"/></svg>Profile</li>
                        <li class="open"><svg class="icon"><use href="#drillhole"/></svg>Drillhole</li>
                        <li class="child"><svg class="icon"><use href="#trace"/></svg>Trace</li>
                        <li class="child"><svg class="icon"><use href="#interval-label"/></svg>Interval Label</li>
                        <li class="child"><svg class="icon"><use href="#solid-trace"/></svg>Solid Trace</li>
                        <li class="child"><svg class="icon"><use href="#interval-hatch"/></svg>Interval Hatch</li>
                        <li class="child"><svg class="icon"><use href="#graph"/></svg>Graph</li>
                        <li class="child"><svg class="icon"><use href="#event"/></svg>Event</li>
                        <li class="child last"><svg class="icon"><use href="#structure"/></svg>Oriented Structure</li>
                        <li><svg class="icon"><use href="#pie"/></svg>Pie Chart</li>
                        <li><svg class="icon"><use href="#image"/></svg>Image</li>
                        <li><svg class="icon"><use href="#cad"/></svg>CAD/GIS</li>
                        <li><svg class="icon"><use href="#seismic"/></svg>Seismic SEG-Y</li>
                        <li><svg class="icon"><use href="#grid-surface"/></svg>Grid Surface</li>
                        <li><svg class="icon"><use href="#solid"/></svg>Wireframe</li>
                        <li><svg class="icon"><use href="#ellipsoid"/></svg>Search Ellipsoid</li>
                    </ul>
                    <div class="scrollbar">
                        <button class="up" aria-label="Scroll up"></button>
                        <div class="thumb"></div>
                        <button class="down" aria-label="Scroll down"></button>
                    </div>
                </div>
                <div class="panel-tabs">
                    <button class="current"><svg class="icon"><use href="#box"/></svg>Vizex Forms</button>
                    <button><svg class="icon"><use href="#properties"/></svg>Properties</button>
                    <button><svg class="icon"><use href="#sections"/></svg>Sections</button>
                </div>
            </section>
            <section class="panel">
                <div class="panel-header">
                    <h2>Display</h2>
                    <button aria-label="Pin"><svg><use href="#pin"/></svg></button>
                    <button aria-label="Maximise"><svg><use href="#maximise"/></svg></button>
                    <button aria-label="Close"><svg><use href="#close"/></svg></button>
                </div>
                <div class="toolbar plain" data-tools="columns columns columns! swap! | sheet-open! segment! box! grey-sheet! | tripod! frame!"></div>
                <ul class="display-list">
                    <li><svg class="icon"><use href="#layers"/></svg>Vizex</li>
                </ul>
            </section>
        </aside>

        <section class="document">
            <div class="document-tabs">
                <button class="document-tab"><svg class="icon"><use href="#layers"/></svg>Vizex<svg class="tab-close"><use href="#close"/></svg></button>
                <button class="add-tab" aria-label="New tab"><svg class="icon"><use href="#new-tab"/></svg></button>
                <button class="tab-menu" aria-label="Tab list"></button>
                <button class="tab-exit" aria-label="Close"><svg><use href="#close"/></svg></button>
            </div>
            <div class="canvas">
                <svg class="plot" id="plot"></svg>
            </div>
        </section>
    </main>

    <footer class="status-bar">
        <span>(-680, -485, 0)</span>
        <span>VE - off</span>
    </footer>

    <div class="taskbar">
        <div class="apps">
            <button aria-label="Start"><svg><use href="#start"/></svg></button>
            <button aria-label="Task view"><svg><use href="#task-view"/></svg></button>
            <button class="running" aria-label="File Explorer"><svg><use href="#explorer"/></svg></button>
            <button aria-label="Phone chat"><svg><use href="#whatsapp"/></svg></button>
            <button aria-label="Paint"><svg><use href="#paint"/></svg></button>
            <button class="running" aria-label="Chrome"><svg><use href="#chrome"/></svg></button>
            <button aria-label="Opera"><svg><use href="#opera"/></svg></button>
            <button class="running" aria-label="WhatsApp"><svg><use href="#whatsapp-desktop"/></svg></button>
            <button class="running" aria-label="Micromine"><svg><use href="#micromine"/></svg></button>
            <button aria-label="SXG"><svg><use href="#sxg"/></svg></button>
            <button aria-label="CorelDRAW"><svg><use href="#corel"/></svg></button>
            <button class="running" aria-label="Mail"><svg><use href="#mail"/></svg></button>
            <button class="running" aria-label="Spotify"><svg><use href="#spotify"/></svg></button>
            <button class="running access" aria-label="Access"><svg><use href="#office"/></svg><b>A</b></button>
            <button class="running excel" aria-label="Excel"><svg><use href="#office"/></svg><b>X</b></button>
        </div>
        <div class="tray">
            <button class="people" aria-label="People"><svg><use href="#people"/></svg></button>
            <button aria-label="Show hidden icons"><svg><use href="#tray-up"/></svg></button>
            <button aria-label="OneDrive"><svg><use href="#cloud"/></svg></button>
            <button aria-label="Dropbox"><svg><use href="#dropbox"/></svg></button>
            <button aria-label="Battery"><svg><use href="#battery"/></svg></button>
            <button aria-label="Network"><svg><use href="#wifi"/></svg></button>
            <button aria-label="Volume"><svg><use href="#volume"/></svg></button>
            <span class="language">ENG</span>
            <span class="clock">9:32 AM<br>2/10/2018</span>
            <button class="notifications" aria-label="Notifications"><svg><use href="#notes"/></svg><span class="badge">1</span></button>
        </div>
    </div>

    <script src="script.js"></script>
</body>
</html>
```

FILE: styles.css
```css
* {
    box-sizing: border-box;
}

body {
    margin: 0;
    height: 100vh;
    display: flex;
    flex-direction: column;
    overflow: hidden;
    font-family: Roboto, "Open Sans", sans-serif;
    font-size: 8px;
    line-height: 12px;
    color: #1b2538;
    background-color: #2b3c5a;
    text-rendering: geometricPrecision;
}

button,
input,
select {
    margin: 0;
    padding: 0;
    border: none;
    border-radius: 0;
    background: none;
    font: inherit;
    color: inherit;
}

h1,
h2 {
    margin: 0;
    font-size: 8px;
    font-weight: normal;
}

ul {
    list-style: none;
    margin: 0;
    padding: 0;
}

svg {
    display: block;
    flex: none;
    width: 10px;
    height: 10px;
}

.sprite {
    position: absolute;
    width: 0;
    height: 0;
}

/* Title and menu */
.title-bar {
    display: flex;
    align-items: center;
    gap: 3px;
    height: 15px;
    padding-left: 1px;
    background-color: #fff;
    color: #999;
}

.title-bar h1 {
    flex: 1;
}

.window-buttons {
    display: flex;
}

.window-buttons button {
    width: 31px;
    display: flex;
    justify-content: center;
}

.window-buttons svg {
    width: 8px;
    height: 8px;
}

.menu-bar {
    display: flex;
    height: 16px;
    padding-left: 2px;
    background: linear-gradient(#c8d1e1, #adb9cd);
    border-top: 1px solid #dde3ec;
}

.menu-bar button {
    padding: 0 4px;
    white-space: nowrap;
}

.menu-bar button:disabled {
    color: #858c99;
}

.menu-bar .support {
    margin-left: 13px;
}

/* Toolbars */
.dock {
    display: flex;
    flex-direction: column;
    gap: 1px;
    background-color: #9ba9c0;
}

.dock-row {
    display: flex;
    height: 14px;
    padding-left: 1px;
}

.toolbar {
    display: flex;
    align-items: center;
    background-color: #bcc7d8;
}

.toolbar.apart {
    margin-left: 8px;
}

.grip {
    width: 2px;
    height: 9px;
    margin: 0 1px;
    background: repeating-linear-gradient(#8391a9 0 1px, transparent 1px 2px);
}

.tool {
    width: 12px;
    height: 12px;
    display: flex;
    align-items: center;
    justify-content: center;
}

.tool.active {
    background-color: #fff3cf;
    border: 1px solid #e5c365;
}

.tool.muted {
    filter: grayscale(1);
    opacity: 0.6;
}

.sep {
    width: 1px;
    height: 10px;
    margin-right: 1px;
    background-color: #8e9bb2;
}

.roomy .sep {
    margin: 0 1px;
}

.caret {
    width: 6px;
    height: 12px;
    display: flex;
    align-items: center;
    justify-content: center;
}

.caret::after,
.tab-menu::after,
.distance-drop::after {
    content: "";
    border: 2px solid transparent;
    border-top-color: currentColor;
    border-bottom: none;
}

.overflow {
    align-self: stretch;
    width: 6px;
    display: flex;
    align-items: flex-end;
    justify-content: center;
    padding-bottom: 2px;
    background-color: #d5dce8;
}

.overflow::after {
    content: "";
    width: 3px;
    height: 4px;
    border-top: 1px solid #444;
    background: linear-gradient(#444, #444) center bottom / 2px 2px no-repeat;
}

.toolbar select {
    appearance: none;
    width: 35px;
    height: 14px;
    padding: 0 9px 0 2px;
    border: 1px solid #a7afbd;
    color: #555;
    opacity: 1;
    background: linear-gradient(45deg, transparent 50%, #777 50%) right 4px center / 2px 2px no-repeat,
                linear-gradient(-45deg, transparent 50%, #777 50%) right 2px center / 2px 2px no-repeat,
                #eceef1;
}

.toolbar .layer-select {
    width: 91px;
}

.fields {
    display: flex;
    align-items: center;
}

.fields label {
    padding: 0 1px;
    color: #7b8492;
}

.distance {
    width: 34px;
    height: 14px;
    padding: 0 2px;
    background-color: #fff;
}

.distance-drop {
    width: 8px;
    height: 14px;
    display: flex;
    align-items: center;
    justify-content: center;
    background-color: #cdd6e4;
}

/* Workspace */
.workspace {
    flex: 1;
    min-height: 0;
    display: flex;
    gap: 2px;
    padding: 3px 3px 0;
}

.sidebar {
    width: 177px;
    display: grid;
    grid-template-rows: 270fr 167fr;
    gap: 3px;
}

.panel {
    display: flex;
    flex-direction: column;
    min-height: 0;
}

.panel-header {
    display: flex;
    align-items: center;
    gap: 2px;
    height: 14px;
    padding: 0 2px;
    color: #dbe3ef;
    background: linear-gradient(#4c6288, #3f5378);
}

.panel-header h2 {
    flex: 1;
}

.panel-header svg {
    width: 7px;
    height: 7px;
}

.tree-box {
    flex: 1;
    min-height: 0;
    display: flex;
    background-color: #fff;
}

.tree {
    flex: 1;
    overflow: hidden;
    padding-left: 6px;
}

.tree li {
    position: relative;
    display: flex;
    align-items: center;
    gap: 2px;
    height: 12px;
    padding-left: 5px;
    border-left: 1px solid #ccc;
    white-space: nowrap;
}

.tree li:nth-child(4n+1) {
    height: 11px;
}

.tree li.child {
    padding-left: 15px;
}

.tree li::before {
    content: "";
    position: absolute;
    left: 0;
    top: 5px;
    width: 5px;
    border-top: 1px solid #ccc;
}

.tree li.child::before {
    left: 10px;
    top: 0;
    height: 100%;
    border-top: none;
    border-left: 1px solid #ccc;
    background: linear-gradient(#ccc, #ccc) center / 5px 1px no-repeat;
}

.tree li.last::before {
    height: 50%;
    background-position: bottom;
}

/* Collapse box beside an open branch */
.tree li.open::after {
    content: "";
    position: absolute;
    left: -4px;
    top: 3px;
    width: 7px;
    height: 7px;
    border: 1px solid #b5b5b5;
    background: linear-gradient(#666, #666) center / 3px 1px no-repeat #fff;
}

.scrollbar {
    width: 11px;
    display: flex;
    flex-direction: column;
    background-color: #f0f0f0;
}

.scrollbar button {
    height: 11px;
    display: flex;
    align-items: center;
    justify-content: center;
}

.scrollbar button::after {
    content: "";
    width: 4px;
    height: 4px;
    border: solid #444;
    border-width: 1px 0 0 1px;
    transform: rotate(45deg);
}

.scrollbar .down {
    margin-top: auto;
}

.scrollbar .down::after {
    transform: rotate(225deg);
}

.scrollbar .thumb {
    height: 79%;
    background-color: #cdcdcd;
}

.panel-tabs {
    display: flex;
    height: 13px;
    color: #fff;
}

.panel-tabs button {
    display: flex;
    align-items: center;
    gap: 1px;
    padding: 0 2px;
}

.panel-tabs .current {
    background-color: #fff;
    color: #1b2538;
}

.toolbar.plain {
    height: 13px;
    padding-left: 3px;
}

.plain .grip,
.plain .overflow {
    display: none;
}

.display-list {
    flex: 1;
    background-color: #fff;
}

.display-list li {
    display: flex;
    align-items: center;
    gap: 2px;
    padding: 1px;
}

/* Document area */
.document {
    flex: 1;
    min-width: 0;
    display: flex;
    flex-direction: column;
    padding-bottom: 1px;
}

.document-tabs {
    display: flex;
    align-items: center;
    height: 14px;
    color: #dbe3ef;
}

.document-tab {
    display: flex;
    align-items: center;
    gap: 3px;
    height: 14px;
    padding: 0 2px;
    background: linear-gradient(#fffbec, #ffe8a6);
    color: #1b2538;
}

.document-tab .tab-close {
    width: 6px;
    height: 6px;
}

.add-tab {
    padding: 0 2px;
    margin-right: auto;
}

.tab-menu {
    width: 9px;
    display: flex;
    justify-content: center;
}

.tab-exit svg {
    width: 6px;
    height: 6px;
}

.canvas {
    flex: 1;
    min-height: 0;
    border: 1px solid #8d835f;
    border-top: 2px solid #ffe8a6;
    border-bottom-color: #ffe8a6;
    background-color: #fff;
}

.plot {
    width: 100%;
    height: 100%;
    font: 7px "Liberation Sans", sans-serif;
    fill: #333;
}

.plot svg {
    overflow: visible;
}

.plot line {
    stroke: #c4c4c4;
    stroke-dasharray: 1 1;
    shape-rendering: crispEdges;
}

.plot line.major {
    stroke: #555;
    stroke-dasharray: none;
}

/* Status bar and taskbar */
.status-bar {
    display: flex;
    justify-content: flex-end;
    align-items: center;
    gap: 10px;
    height: 16px;
    color: #dbe3ef;
    background-color: #2b3a58;
}

.status-bar span {
    padding: 0 2px;
    border-left: 1px solid #c0c9d8;
}

.taskbar {
    display: flex;
    justify-content: space-between;
    height: 27px;
    background-color: #161b1f;
    color: #fff;
}

.apps {
    display: flex;
}

.apps button {
    position: relative;
    width: 33px;
    display: flex;
    align-items: center;
    justify-content: center;
}

.apps svg {
    width: 16px;
    height: 16px;
}

.apps .running::after {
    content: "";
    position: absolute;
    left: 3px;
    right: 3px;
    bottom: 0;
    height: 2px;
    background-color: #68a5d8;
}

.apps .access {
    color: #b03038;
}

.apps .excel {
    color: #1d7245;
}

.apps b {
    position: absolute;
    left: 10px;
    top: 8px;
    color: #fff;
}

.tray {
    display: flex;
    align-items: center;
    padding-right: 3px;
}

.tray button {
    width: 16px;
    display: flex;
    justify-content: center;
}

.tray svg {
    width: 12px;
    height: 12px;
}

.tray .people {
    margin-right: 8px;
}

.language {
    padding: 0 8px 0 5px;
}

.clock {
    width: 38px;
    text-align: center;
}

.tray .notifications {
    position: relative;
    width: 36px;
}

.badge {
    position: absolute;
    left: 19px;
    top: 4px;
    width: 9px;
    height: 9px;
    border: 1px solid #8a8f94;
    border-radius: 50%;
    background-color: #33383c;
    font-size: 7px;
    line-height: 7px;
}
```

FILE: script.js
```js
// Toolbars: "name*" is switched on, "name!" is greyed out, "|" is a separator, "v" a drop arrow
function buildToolbar(bar) {
    const items = bar.dataset.tools.split(' ').map(item => {
        if (item === '|') return '<span class="sep"></span>';
        if (item === 'v') return '<button class="caret" aria-label="More"></button>';
        const name = item.replace(/[*!]/, '');
        let state = '';
        if (item.endsWith('*')) state = ' active';
        if (item.endsWith('!')) state = ' muted';
        return `<button class="tool${state}" title="${name.replaceAll('-', ' ')}"><svg><use href="#${name}"/></svg></button>`;
    }).join('');
    // drop-downs come first in a bar, the distance fields come last
    const fields = bar.querySelector('.fields');
    if (fields) {
        fields.insertAdjacentHTML('beforebegin', items);
    } else {
        bar.insertAdjacentHTML('beforeend', items);
    }
    bar.insertAdjacentHTML('afterbegin', '<span class="grip"></span>');
    bar.insertAdjacentHTML('beforeend', '<button class="overflow" aria-label="Toolbar options"></button>');
}
document.querySelectorAll('[data-tools]').forEach(buildToolbar);

// Plot grid, drawn outwards from the centre, five cells to every 1000 m
function drawPlot() {
    const plot = document.getElementById('plot');
    const cell = 42.3;
    const width = plot.clientWidth;
    const height = plot.clientHeight;
    const cx = Math.floor(width / 2);
    const cy = Math.floor(height / 2);
    let minor = '';
    let major = '';
    let labels = '';

    const line = (i, x1, y1, x2, y2) => {
        if (i % 5 === 0) major += `<line class="major" x1="${x1}" y1="${y1}" x2="${x2}" y2="${y2}"/>`;
        else minor += `<line x1="${x1}" y1="${y1}" x2="${x2}" y2="${y2}"/>`;
    };

    const columns = Math.floor(cx / cell);
    for (let i = -columns; i <= columns; i++) {
        const x = cx + Math.floor(i * cell) + 0.5;
        line(i, x, 0, x, height);
        if (i % 5 === 0) {
            labels += `<text transform="translate(${x - 3} 3) rotate(-90)" text-anchor="end">${i * 200}X</text>`;
            labels += `<text transform="translate(${x - 3} ${height - 3}) rotate(-90)">${i * 200}X</text>`;
        }
    }

    const rows = Math.floor(cy / cell);
    for (let i = -rows; i <= rows; i++) {
        const y = cy + Math.floor(i * cell) + 0.5;
        line(i, 0, y, width, y);
    }

    for (const [text, y] of [['0Y', cy - 3], ['-1000Y', height - 4]]) {
        labels += `<text x="3" y="${y}">${text}</text>`;
        labels += `<text x="${width - 5}" y="${y}" text-anchor="end">${text}</text>`;
    }
    plot.innerHTML = minor + major + labels;
}
drawPlot();
window.addEventListener('resize', drawPlot);
```
